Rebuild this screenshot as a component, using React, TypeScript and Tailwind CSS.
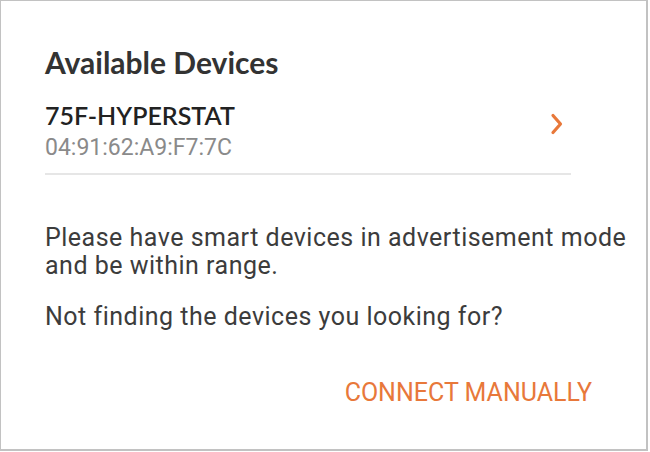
import React from 'react';

const ORANGE = '#e8783a';

export default function App() {
  return (
    <div className="w-[650px] h-[452px] bg-white">
      <div className="w-[648px] h-[451px] border-l border-t border-r-2 border-b-2 border-[#c2c2c2] bg-white pl-[44px] pr-[16px] pt-[43px] flex flex-col">
        <h2
          className="text-[30px] font-bold text-[#333333] leading-[36px]"
          style={{ fontFamily: 'Lato, sans-serif' }}
        >
          Available Devices
        </h2>

        <div className="mt-[20px] w-[526px] border-b-2 border-[#e6e6e6] pb-[11px] flex items-center justify-between">
          <div className="flex flex-col">
            <span
              className="text-[25px] font-semibold text-[#222222] leading-[30px]"
              style={{ fontFamily: 'Lato, sans-serif' }}
            >
              75F-HYPERSTAT
            </span>
            <span
              className="text-[23px] text-[#8a8a8a] leading-[28px] mt-[4px]"
              style={{ fontFamily: 'Roboto, sans-serif' }}
            >
              04:91:62:A9:F7:7C
            </span>
          </div>
          <svg width="16" height="24" viewBox="0 0 16 24" className="mr-[6px] mb-[14px]">
            <path d="M4 3.5 L11.5 12 L4 20.5" fill="none" stroke={ORANGE} strokeWidth="3.2" strokeLinecap="round" strokeLinejoin="round" />
          </svg>
        </div>

        <div
          className="mt-[49px] text-[25px] tracking-[0.5px] text-[#3c3c3c] leading-[28px]"
          style={{ fontFamily: 'Roboto, sans-serif' }}
        >
          <p>Please have smart devices in advertisement mode and be within range.</p>
          <p className="mt-[23px]">Not finding the devices you looking for?</p>
        </div>

        <div className="mt-[48px] flex justify-end pr-[38px]">
          <span
            className="text-[25px] leading-[28px]"
            style={{ fontFamily: 'Roboto, sans-serif', color: ORANGE }}
          >
            CONNECT MANUALLY
          </span>
        </div>
      </div>
    </div>
  );
}
